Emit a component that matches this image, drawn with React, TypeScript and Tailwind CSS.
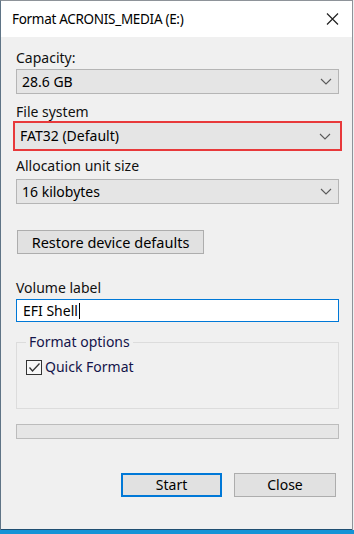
import React from 'react';

const font = { fontFamily: '"Noto Sans", "Open Sans", Arial, sans-serif' };

const Chevron: React.FC = () => (
  <svg width="12" height="7" viewBox="0 0 12 7" className="shrink-0">
    <polyline points="1,1 6,6 11,1" fill="none" stroke="#5a5a5a" strokeWidth="1.1" />
  </svg>
);

const Combo: React.FC<{ value: string; highlight?: boolean }> = ({ value, highlight }) =>
  highlight ? (
    <div className="-mx-[3px] h-[30px] border-2 border-[#e8393b] bg-[#e5e5e5] flex items-center justify-between pl-[5px] pr-[9px]">
      <span className="text-[14px] text-black leading-none">{value}</span>
      <Chevron />
    </div>
  ) : (
    <div className="h-[25px] border border-[#b5b5b5] bg-[#e5e5e5] flex items-center justify-between pl-[5px] pr-[6px]">
      <span className="text-[14px] text-black leading-none">{value}</span>
      <Chevron />
    </div>
  );

const Label: React.FC<{ children: React.ReactNode; className?: string }> = ({ children, className }) => (
  <div className={`h-[18px] leading-[18px] text-[14px] text-[#111] ${className ?? ''}`}>{children}</div>
);

export default function App() {
  return (
    <div className="w-[354px] h-[534px] bg-[#eef0f2] flex flex-col overflow-hidden" style={font}>
      <div className="w-[353px] h-[530px] border-l border-r border-t border-[#8e9399] border-l-[#5f7486] flex flex-col">
        {/* title bar */}
        <div className="h-[36px] bg-white flex items-center justify-between pl-[11px] pr-[13px] shrink-0">
          <span className="text-[13.5px] text-black tracking-[-0.3px]">Format ACRONIS_MEDIA (E:)</span>
          <svg width="13" height="12" viewBox="0 0 13 12">
            <path d="M1 0.5 L12 11.5 M12 0.5 L1 11.5" stroke="#222" strokeWidth="1.2" fill="none" />
          </svg>
        </div>

        {/* body */}
        <div className="flex-1 bg-[#f0f0f0] pl-[15px] pr-[13px] flex flex-col">
          <Label className="mt-[12px]">Capacity:</Label>
          <div className="mt-[2px]">
            <Combo value="28.6 GB" />
          </div>

          <Label className="mt-[9px] h-[17px]">File system</Label>
          <Combo value="FAT32 (Default)" highlight />

          <Label className="mt-[6px]">Allocation unit size</Label>
          <div className="mt-[4px]">
            <Combo value="16 kilobytes" />
          </div>

          <button className="mt-[26px] ml-px w-[187px] h-[24px] border border-[#adadad] bg-[#e1e1e1] text-[14.5px] text-black leading-none">
            Restore device defaults
          </button>

          <Label className="mt-[25px]">Volume label</Label>
          <div className="mt-[2px] h-[23px] border border-[#0078d7] bg-white flex items-center pl-[6px]">
            <span className="text-[14px] text-black leading-none">EFI Shell</span>
            <span className="w-px h-[16px] bg-black ml-px" />
          </div>

          <fieldset className="mt-[11px] h-[76px] border border-[#dcdcdc] px-[9px]">
            <legend className="px-[3px] h-[18px] leading-[18px] text-[14px] text-[#14144a]">Format options</legend>
            <div className="mt-[7px] h-[18px] flex items-center gap-[3px]">
              <div className="w-[16px] h-[15px] border border-[#333] bg-[#f7f7f7] flex items-center justify-center">
                <svg width="13" height="11" viewBox="0 0 13 11">
                  <polyline points="1.5,5.5 4.5,9 11.5,1.5" fill="none" stroke="#333" strokeWidth="1.3" />
                </svg>
              </div>
              <span className="text-[14px] text-[#14144a] leading-none">Quick Format</span>
            </div>
          </fieldset>

          <div className="mt-[15px] h-[15px] border border-[#bcbcbc] bg-[#e6e6e6]" />

          <div className="mt-[34px] flex justify-end gap-[12px] mr-[3px]">
            <button className="w-[101px] h-[24px] border-2 border-[#0078d7] bg-[#e1e1e1] text-[14px] text-black leading-none">
              Start
            </button>
            <button className="w-[102px] h-[24px] border border-[#adadad] bg-[#e1e1e1] text-[14px] text-black leading-none">
              Close
            </button>
          </div>
        </div>
        <div className="h-px bg-[#1f4f72] shrink-0" />
      </div>
      <div className="flex-1 bg-[#1593d6]" />
    </div>
  );
}
